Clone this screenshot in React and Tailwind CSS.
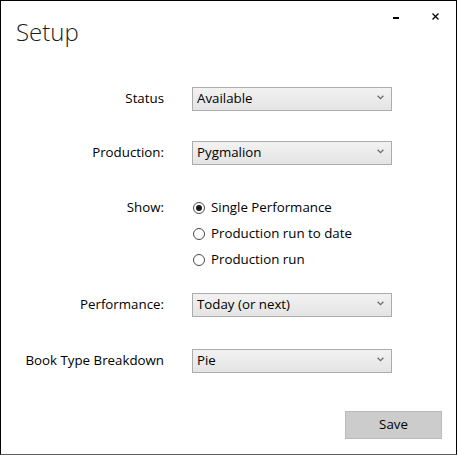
import React from "react";

function Chevron() {
  return (
    <svg width="7" height="5" viewBox="0 0 7 5" className="mb-[3px]">
      <polyline points="0.6,0.8 3.5,3.6 6.4,0.8" fill="none" stroke="#6a6a6a" strokeWidth="1.3" />
    </svg>
  );
}

function Combo({ value }) {
  return (
    <div className="flex h-[24px] w-[200px] items-center justify-between border border-[#acacac] bg-linear-to-b from-[#f2f2f2] to-[#e4e4e4] pl-[4px] pr-[7px] text-black">
      <span>{value}</span>
      <Chevron />
    </div>
  );
}

function Label({ children }) {
  return <div className="w-[163px] shrink-0 text-right text-black">{children}</div>;
}

function Radio({ checked, label }) {
  return (
    <div className="flex h-[26px] items-center">
      <span className="ml-[1px] flex h-[12px] w-[12px] items-center justify-center rounded-full border border-[#4a4a4a] bg-white">
        {checked && <span className="h-[6px] w-[6px] rounded-full bg-[#1a1a1a]" />}
      </span>
      <span className="ml-[6px] text-black">{label}</span>
    </div>
  );
}

export default function App() {
  return (
    <div className="flex h-[455px] w-[457px] flex-col border border-black border-b-[#5f5f5f] bg-white font-['Open_Sans','Noto_Sans',sans-serif] text-[13.3px]">
      <div className="flex h-[86px] shrink-0 items-start">
        <div className="flex-1 pl-[15px] pt-[19px] text-[24px] font-light leading-[24px] text-[#1a1a1a]">Setup</div>
        <div className="flex items-start pr-[17px]">
          <div className="mr-[33px] mt-[16px] h-[2px] w-[6px] bg-black" />
          <svg width="7" height="7" viewBox="0 0 7 7" className="mt-[12px]">
            <line x1="0.5" y1="0.5" x2="6.5" y2="6.5" stroke="#000" strokeWidth="1.3" />
            <line x1="6.5" y1="0.5" x2="0.5" y2="6.5" stroke="#000" strokeWidth="1.3" />
          </svg>
        </div>
      </div>

      <div className="flex items-center">
        <Label>Status</Label>
        <div className="ml-[28px]"><Combo value="Available" /></div>
      </div>

      <div className="mt-[30px] flex items-center">
        <Label>Production:</Label>
        <div className="ml-[28px]"><Combo value="Pygmalion" /></div>
      </div>

      <div className="mt-[30px] flex items-start">
        <div className="flex h-[26px] w-[163px] shrink-0 items-center justify-end text-black">Show:</div>
        <div className="ml-[28px] flex flex-col">
          <Radio checked label="Single Performance" />
          <Radio label="Production run to date" />
          <Radio label="Production run" />
        </div>
      </div>

      <div className="mt-[20px] flex items-center">
        <Label>Performance:</Label>
        <div className="ml-[28px]"><Combo value="Today (or next)" /></div>
      </div>

      <div className="mt-[32px] flex items-center">
        <Label>Book Type Breakdown</Label>
        <div className="ml-[28px]"><Combo value="Pie" /></div>
      </div>

      <div className="mt-[38px] flex justify-end pr-[14px]">
        <button className="flex h-[28px] w-[97px] items-center justify-center border border-[#bababa] bg-[#cccccc] text-black">
          Save
        </button>
      </div>
    </div>
  );
}
